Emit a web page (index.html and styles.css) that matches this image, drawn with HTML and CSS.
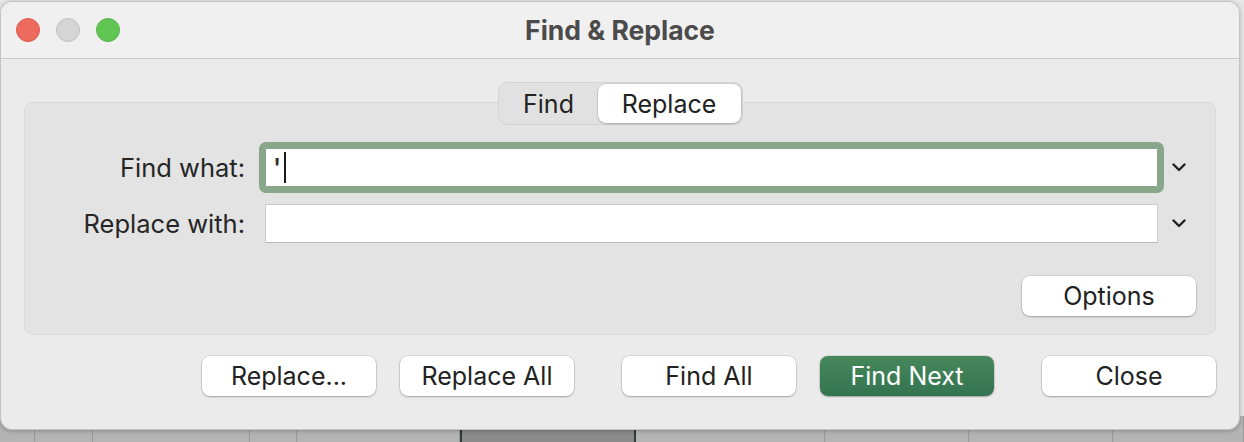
FILE: index.html
```html
<!DOCTYPE html>
<html lang="en">
<head>
    <meta charset="UTF-8">
    <meta name="viewport" content="width=device-width, initial-scale=1.0">
    <title>Find &amp; Replace</title>
    <link rel="stylesheet" href="styles.css">
</head>
<body>

    <div class="window">
        <header class="titlebar">
            <div class="lights">
                <span class="light red"></span>
                <span class="light gray"></span>
                <span class="light green"></span>
            </div>
            <h1>Find &amp; Replace</h1>
            <div></div>
        </header>

        <div class="content">
            <div class="tabs">
                <button type="button" class="tab">Find</button>
                <button type="button" class="tab active">Replace</button>
            </div>

            <div class="panel">
                <div class="fields">
                    <label class="label">Find what:</label>
                    <div class="field focused"><span class="value">'</span><span class="caret"></span></div>
                    <svg class="chevron" width="14" height="9" viewBox="0 0 14 9">
                        <polyline points="1.5,1.5 7,7 12.5,1.5" fill="none" stroke="#222" stroke-width="2.4" stroke-linecap="round" stroke-linejoin="round"/>
                    </svg>

                    <label class="label">Replace with:</label>
                    <div class="field"></div>
                    <svg class="chevron" width="14" height="9" viewBox="0 0 14 9">
                        <polyline points="1.5,1.5 7,7 12.5,1.5" fill="none" stroke="#222" stroke-width="2.4" stroke-linecap="round" stroke-linejoin="round"/>
                    </svg>
                </div>

                <div class="options-row">
                    <button type="button" class="btn">Options</button>
                </div>
            </div>

            <div class="actions">
                <div class="group">
                    <button type="button" class="btn">Replace...</button>
                    <button type="button" class="btn">Replace All</button>
                </div>
                <div class="group">
                    <button type="button" class="btn">Find All</button>
                    <button type="button" class="btn primary">Find Next</button>
                </div>
                <button type="button" class="btn">Close</button>
            </div>
        </div>
    </div>

    <!-- spreadsheet behind the dialog -->
    <div class="sheet">
        <span style="width: 35px"></span>
        <span style="width: 58px"></span>
        <span style="width: 157px"></span>
        <span style="width: 47px"></span>
        <span style="width: 163px"></span>
        <span class="selected" style="width: 176px"></span>
        <span style="width: 189px"></span>
        <span style="width: 144px"></span>
        <span style="width: 144px"></span>
        <span style="width: 131px"></span>
    </div>

</body>
</html>
```

FILE: styles.css
```css
body {
    font-family: 'Inter', 'Liberation Sans', sans-serif;
    background-color: #e6e6e6;
    margin: 0;
    padding: 0;
    overflow: hidden;
}

.window {
    position: relative;
    z-index: 1;
    box-sizing: border-box;
    width: 1240px;
    height: 429px;
    margin-top: 1px;
    background-color: #ebebeb;
    border: 1px solid #c3c3c3;
    border-radius: 12px;
    box-shadow: 0 1px 4px rgba(0, 0, 0, 0.25);
    overflow: hidden;
}

.titlebar {
    display: grid;
    grid-template-columns: 1fr auto 1fr;
    align-items: center;
    height: 56px;
    background-color: #f0f0f0;
    border-bottom: 1px solid #c9c9c9;
}

.lights {
    display: flex;
    gap: 16px;
    padding-left: 15px;
}

.light {
    box-sizing: border-box;
    width: 24px;
    height: 24px;
    border-radius: 50%;
}

.red {
    background-color: #ec6a5e;
    border: 1px solid #e0574b;
}

.gray {
    background-color: #d5d5d5;
    border: 1px solid #c0c0c0;
}

.green {
    background-color: #61c554;
    border: 1px solid #55b548;
}

h1 {
    margin: 0;
    font-size: 26.5px;
    font-weight: 700;
    color: #4b4b4b;
}

.content {
    padding: 23px 23px 0 23px;
}

.tabs {
    position: relative;
    z-index: 1;
    display: flex;
    width: 245px;
    height: 43px;
    box-sizing: border-box;
    margin: 0 auto -23px;
    padding: 1px;
    background-color: #e1e1e1;
    border: 1px solid #d3d3d3;
    border-radius: 9px;
}

.tab {
    font-family: inherit;
    font-size: 25px;
    color: #222;
    background: none;
    border: none;
    border-radius: 8px;
    padding: 0;
    width: 98px;
}

.tab.active {
    flex: 1;
    background-color: white;
    box-shadow: 0 0 0 0.5px rgba(0, 0, 0, 0.15), 0 1px 2px rgba(0, 0, 0, 0.2);
}

.panel {
    padding: 45px 19px 18px 0;
    background-color: #e3e3e3;
    border: 1px solid #d9d9d9;
    border-radius: 8px;
}

.fields {
    display: grid;
    grid-template-columns: 220px 1fr 38px;
    row-gap: 17px;
    align-items: center;
}

.label {
    text-align: right;
    font-size: 25.5px;
    color: #262626;
}

.field {
    display: flex;
    align-items: center;
    box-sizing: border-box;
    height: 39px;
    margin-left: 20px;
    padding-left: 7px;
    background-color: white;
    border: 1px solid #cbcbcb;
    border-bottom-color: #b9b9b9;
    font-size: 25px;
    color: #333;
}

.field.focused {
    border-color: #88a689;
    outline: 6px solid #88a689;
    border-radius: 1px;
}

.value {
    font-weight: 600;
}

.caret {
    display: inline-block;
    width: 2px;
    height: 31px;
    margin-left: 3px;
    background-color: #1a1a1a;
}

.chevron {
    margin-left: 14px;
}

.options-row {
    display: flex;
    justify-content: flex-end;
    margin-top: 33px;
}

.btn {
    width: 174px;
    height: 40px;
    padding: 0;
    font-family: inherit;
    font-size: 25px;
    color: #222;
    background-color: white;
    border: none;
    border-radius: 8px;
    box-shadow: 0 0 0 0.5px rgba(0, 0, 0, 0.15), 0 1px 2px rgba(0, 0, 0, 0.25);
}

.btn.primary {
    color: white;
    background: linear-gradient(#47875b, #347450);
}

.actions {
    display: flex;
    justify-content: flex-end;
    gap: 48px;
    margin-top: 21px;
}

.group {
    display: flex;
    gap: 24px;
}

.sheet {
    display: flex;
    height: 26px;
    margin-top: -14px;
    background-color: #b4b4b4;
}

.sheet span {
    box-sizing: border-box;
    flex: none;
    border-right: 1px solid #9a9a9a;
}

.sheet .selected {
    background-color: #8b8b8b;
    border-left: 2px solid #2f3b33;
    border-right: 2px solid #2f3b33;
}
```
